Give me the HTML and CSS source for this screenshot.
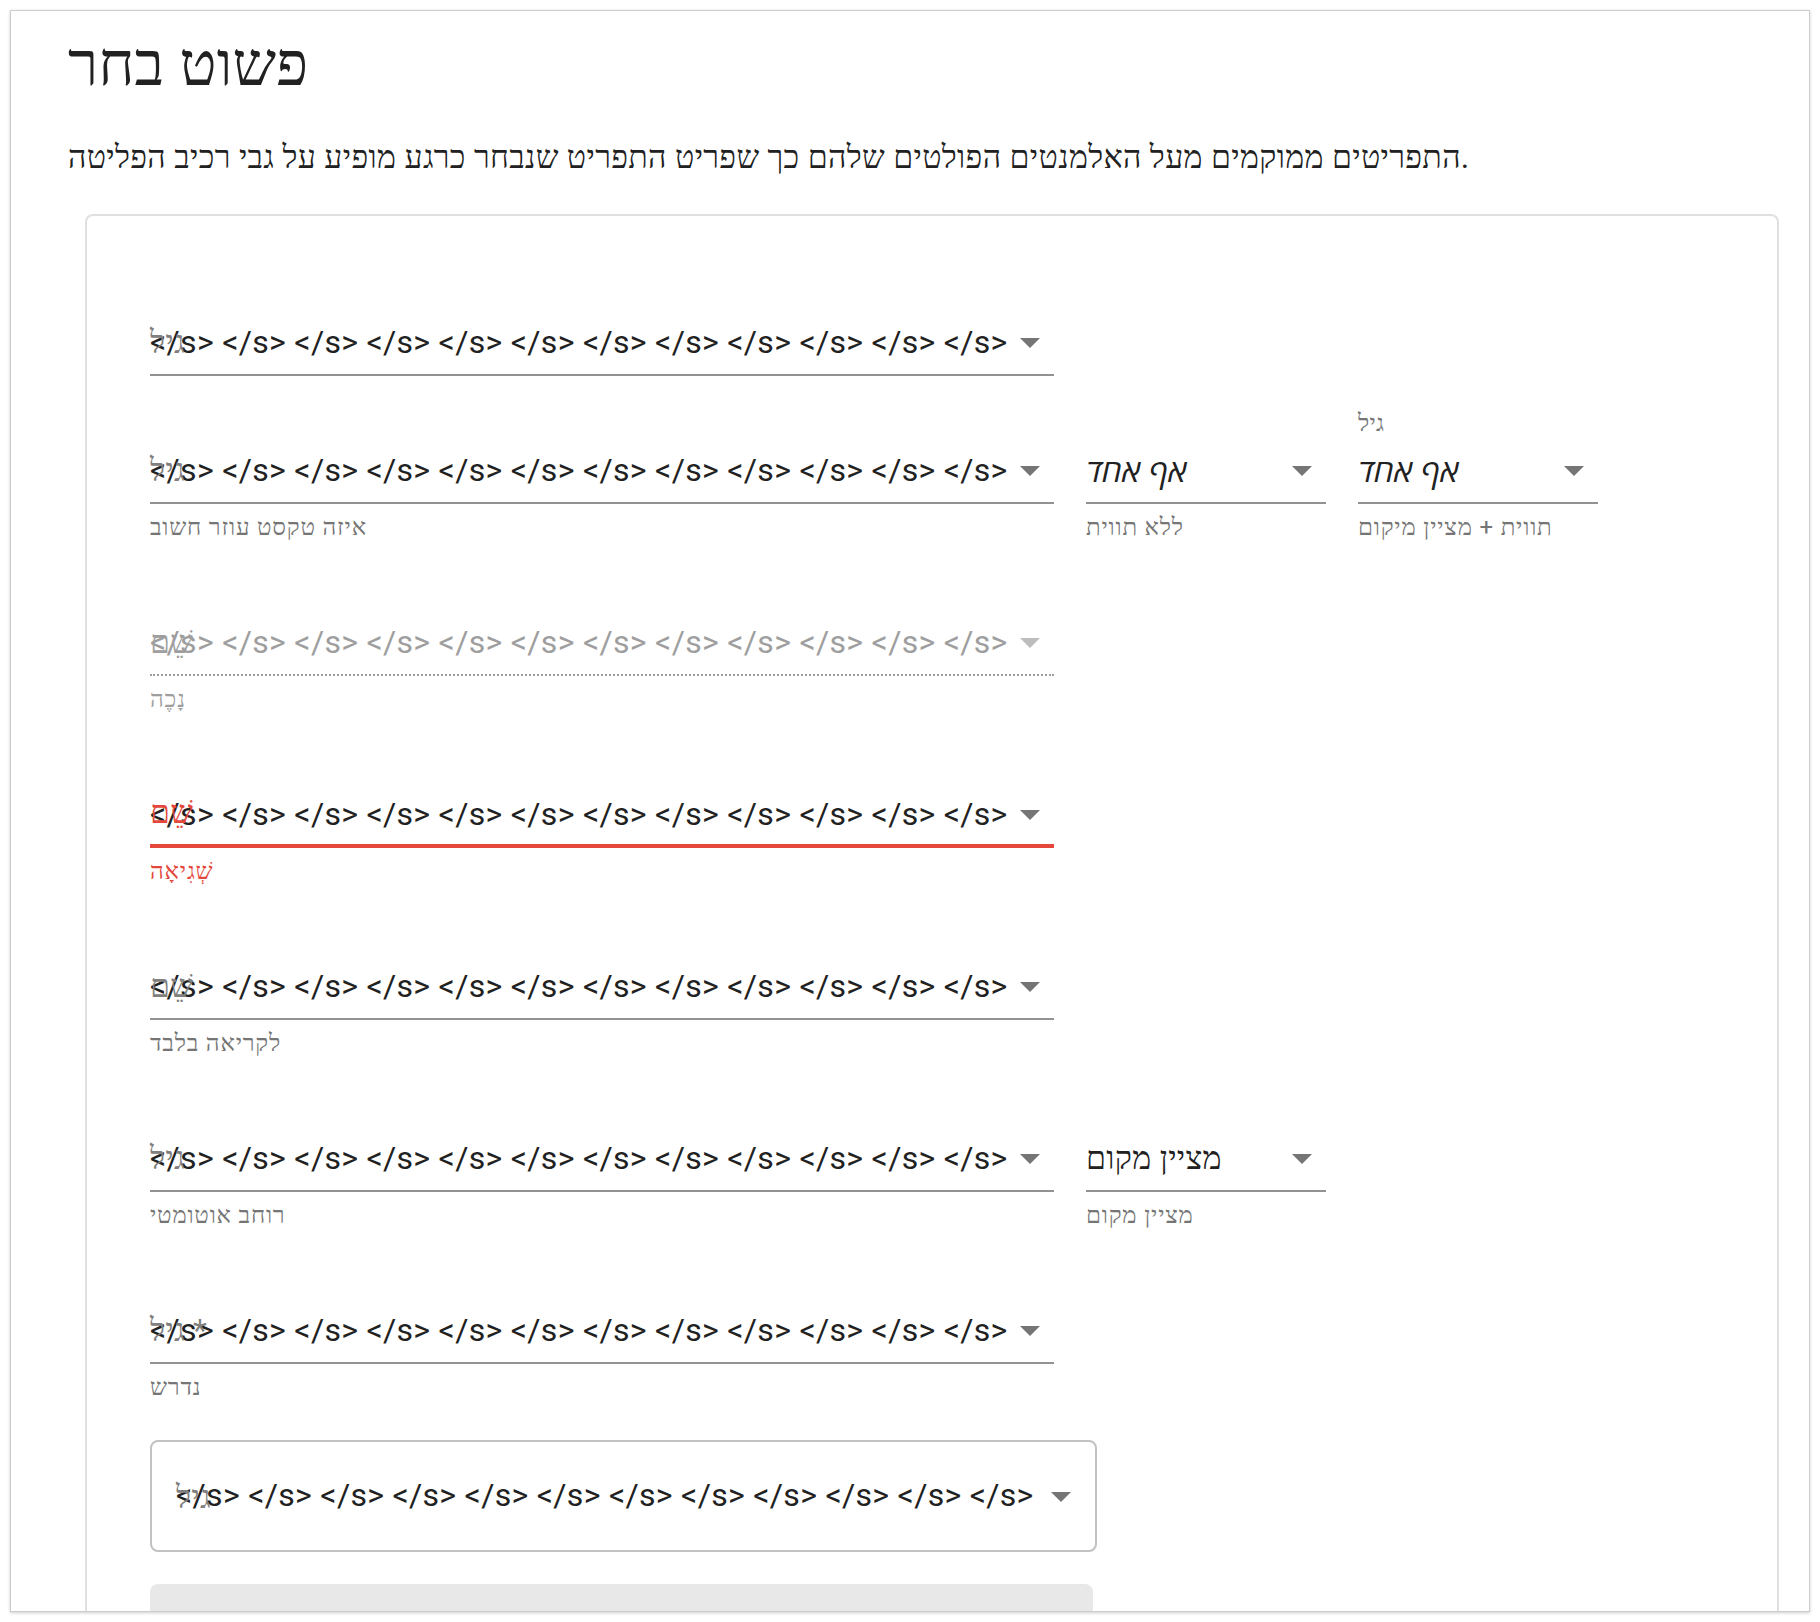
FILE: index.html
```html
<!DOCTYPE html>
<html lang="he">
<head>
<meta charset="utf-8">
<title>פשוט בחר</title>
<link rel="stylesheet" href="styles.css">
</head>
<body>
<div class="page">
  <h1 class="title">פשוט בחר</h1>
  <p class="desc">התפריטים ממוקמים מעל האלמנטים הפולטים שלהם כך שפריט התפריט שנבחר כרגע מופיע על גבי רכיב הפליטה.</p>
  <div class="demo">
    <div class="row">
      <div class="field wide">
        <div class="box">
          <span class="label">גיל</span>
          <span class="value">&lt;/s&gt; &lt;/s&gt; &lt;/s&gt; &lt;/s&gt; &lt;/s&gt; &lt;/s&gt; &lt;/s&gt; &lt;/s&gt; &lt;/s&gt; &lt;/s&gt; &lt;/s&gt; &lt;/s&gt;</span>
          <span class="arrow"></span>
        </div>
      </div>
    </div>

    <div class="row">
      <div class="field wide">
        <div class="box">
          <span class="label">גיל</span>
          <span class="value">&lt;/s&gt; &lt;/s&gt; &lt;/s&gt; &lt;/s&gt; &lt;/s&gt; &lt;/s&gt; &lt;/s&gt; &lt;/s&gt; &lt;/s&gt; &lt;/s&gt; &lt;/s&gt; &lt;/s&gt;</span>
          <span class="arrow"></span>
        </div>
        <div class="helper">איזה טקסט עוזר חשוב</div>
      </div>
      <div class="field narrow">
        <div class="box">
          <span class="value italic">אף אחד</span>
          <span class="arrow"></span>
        </div>
        <div class="helper">ללא תווית</div>
      </div>
      <div class="field narrow">
        <div class="box">
          <span class="label floated">גיל</span>
          <span class="value italic">אף אחד</span>
          <span class="arrow"></span>
        </div>
        <div class="helper">תווית + מציין מיקום</div>
      </div>
    </div>

    <div class="row">
      <div class="field wide disabled">
        <div class="box">
          <span class="label">שֵׁם</span>
          <span class="value">&lt;/s&gt; &lt;/s&gt; &lt;/s&gt; &lt;/s&gt; &lt;/s&gt; &lt;/s&gt; &lt;/s&gt; &lt;/s&gt; &lt;/s&gt; &lt;/s&gt; &lt;/s&gt; &lt;/s&gt;</span>
          <span class="arrow"></span>
        </div>
        <div class="helper">נָכֶה</div>
      </div>
    </div>

    <div class="row">
      <div class="field wide error">
        <div class="box">
          <span class="label">שֵׁם</span>
          <span class="value">&lt;/s&gt; &lt;/s&gt; &lt;/s&gt; &lt;/s&gt; &lt;/s&gt; &lt;/s&gt; &lt;/s&gt; &lt;/s&gt; &lt;/s&gt; &lt;/s&gt; &lt;/s&gt; &lt;/s&gt;</span>
          <span class="arrow"></span>
        </div>
        <div class="helper">שְׁגִיאָה</div>
      </div>
    </div>

    <div class="row">
      <div class="field wide">
        <div class="box">
          <span class="label">שֵׁם</span>
          <span class="value">&lt;/s&gt; &lt;/s&gt; &lt;/s&gt; &lt;/s&gt; &lt;/s&gt; &lt;/s&gt; &lt;/s&gt; &lt;/s&gt; &lt;/s&gt; &lt;/s&gt; &lt;/s&gt; &lt;/s&gt;</span>
          <span class="arrow"></span>
        </div>
        <div class="helper">לקריאה בלבד</div>
      </div>
    </div>

    <div class="row">
      <div class="field wide">
        <div class="box">
          <span class="label">גיל</span>
          <span class="value">&lt;/s&gt; &lt;/s&gt; &lt;/s&gt; &lt;/s&gt; &lt;/s&gt; &lt;/s&gt; &lt;/s&gt; &lt;/s&gt; &lt;/s&gt; &lt;/s&gt; &lt;/s&gt; &lt;/s&gt;</span>
          <span class="arrow"></span>
        </div>
        <div class="helper">רוחב אוטומטי</div>
      </div>
      <div class="field narrow">
        <div class="box">
          <span class="value">מציין מקום</span>
          <span class="arrow"></span>
        </div>
        <div class="helper">מציין מקום</div>
      </div>
    </div>

    <div class="row">
      <div class="field wide">
        <div class="box">
          <span class="label">גיל *</span>
          <span class="value">&lt;/s&gt; &lt;/s&gt; &lt;/s&gt; &lt;/s&gt; &lt;/s&gt; &lt;/s&gt; &lt;/s&gt; &lt;/s&gt; &lt;/s&gt; &lt;/s&gt; &lt;/s&gt; &lt;/s&gt;</span>
          <span class="arrow"></span>
        </div>
        <div class="helper">נדרש</div>
      </div>
    </div>

    <div class="outlined">
      <span class="label">גיל</span>
      <span class="value">&lt;/s&gt; &lt;/s&gt; &lt;/s&gt; &lt;/s&gt; &lt;/s&gt; &lt;/s&gt; &lt;/s&gt; &lt;/s&gt; &lt;/s&gt; &lt;/s&gt; &lt;/s&gt; &lt;/s&gt;</span>
      <span class="arrow"></span>
    </div>

    <div class="filled"></div>
  </div>
</div>
</body>
</html>
```

FILE: styles.css
```css
* { box-sizing: border-box; }

html, body {
  margin: 0;
  padding: 0;
  background: #ffffff;
}

body {
  padding: 10px;
  font-family: Roboto, serif;
  color: #212121;
  direction: ltr;
}

.page {
  height: calc(100vh - 20px);
  overflow: hidden;
  border: 1px solid #cccccc;
  box-shadow: 0 1px 3px rgba(0, 0, 0, 0.2);
  padding: 0 0 0 57px;
}

.title {
  margin: 17px 0 0 0;
  font-size: 61.5px;
  line-height: 72px;
  font-weight: 400;
  color: #212121;
}

.desc {
  margin: 37px 0 0 0;
  font-size: 32px;
  line-height: 40px;
  letter-spacing: 0.3px;
  color: #212121;
}

.demo {
  margin: 37px 30px 0 17px;
  border: 2px solid #e0e0e0;
  border-radius: 8px;
  padding: 46px 0 0 63px;
  min-height: 1500px;
}

.row {
  display: flex;
  gap: 32px;
  margin-bottom: 14px;
}

.field.wide { width: 904px; }
.field.narrow { width: 240px; }

.box {
  position: relative;
  height: 114px;
  display: flex;
  align-items: flex-end;
  border-bottom: 2px solid #929292;
  padding-bottom: 12px;
}

.value {
  font-size: 32px;
  line-height: 40px;
  letter-spacing: 0.3px;
  white-space: nowrap;
  color: #212121;
}

.value.italic {
  font-family: "Open Sans", Roboto, serif;
  font-style: italic;
  letter-spacing: 0.3px;
}

.label {
  position: absolute;
  left: 0;
  bottom: 12px;
  font-size: 32px;
  line-height: 40px;
  letter-spacing: 0.3px;
  color: #808080;
  white-space: nowrap;
}

.label.floated {
  bottom: auto;
  top: 17px;
  font-size: 24px;
  line-height: 32px;
  color: #757575;
}

.arrow {
  margin-left: auto;
  margin-right: 14px;
  margin-bottom: 14px;
  align-self: flex-end;
  width: 0;
  height: 0;
  border-left: 10px solid transparent;
  border-right: 10px solid transparent;
  border-top: 10px solid #757575;
  flex: none;
}

.helper {
  padding-top: 7px;
  height: 44px;
  font-size: 24px;
  line-height: 32px;
  letter-spacing: 0.8px;
  color: #757575;
  white-space: nowrap;
}

.disabled .box {
  border-bottom: 2px dotted #9e9e9e;
}
.disabled .value,
.disabled .label,
.disabled .helper {
  color: #9e9e9e;
}
.disabled .arrow { border-top-color: #bdbdbd; }

.error .box {
  border-bottom: 4px solid #e4473b;
  padding-bottom: 10px;
}
.error .label,
.error .helper { color: #e4473b; }

.outlined {
  position: relative;
  margin-top: 32px;
  width: 947px;
  height: 112px;
  border: 2px solid #c2c2c2;
  border-radius: 8px;
  display: flex;
  align-items: center;
  padding: 0 24px 2px 24px;
}

.outlined .label {
  left: 24px;
  bottom: auto;
  top: 35px;
}

.outlined .arrow {
  align-self: center;
  margin: 4px 0 0 auto;
}

.filled {
  margin-top: 32px;
  width: 943px;
  height: 112px;
  background: #e8e8e8;
  border-radius: 8px 8px 0 0;
}
```
